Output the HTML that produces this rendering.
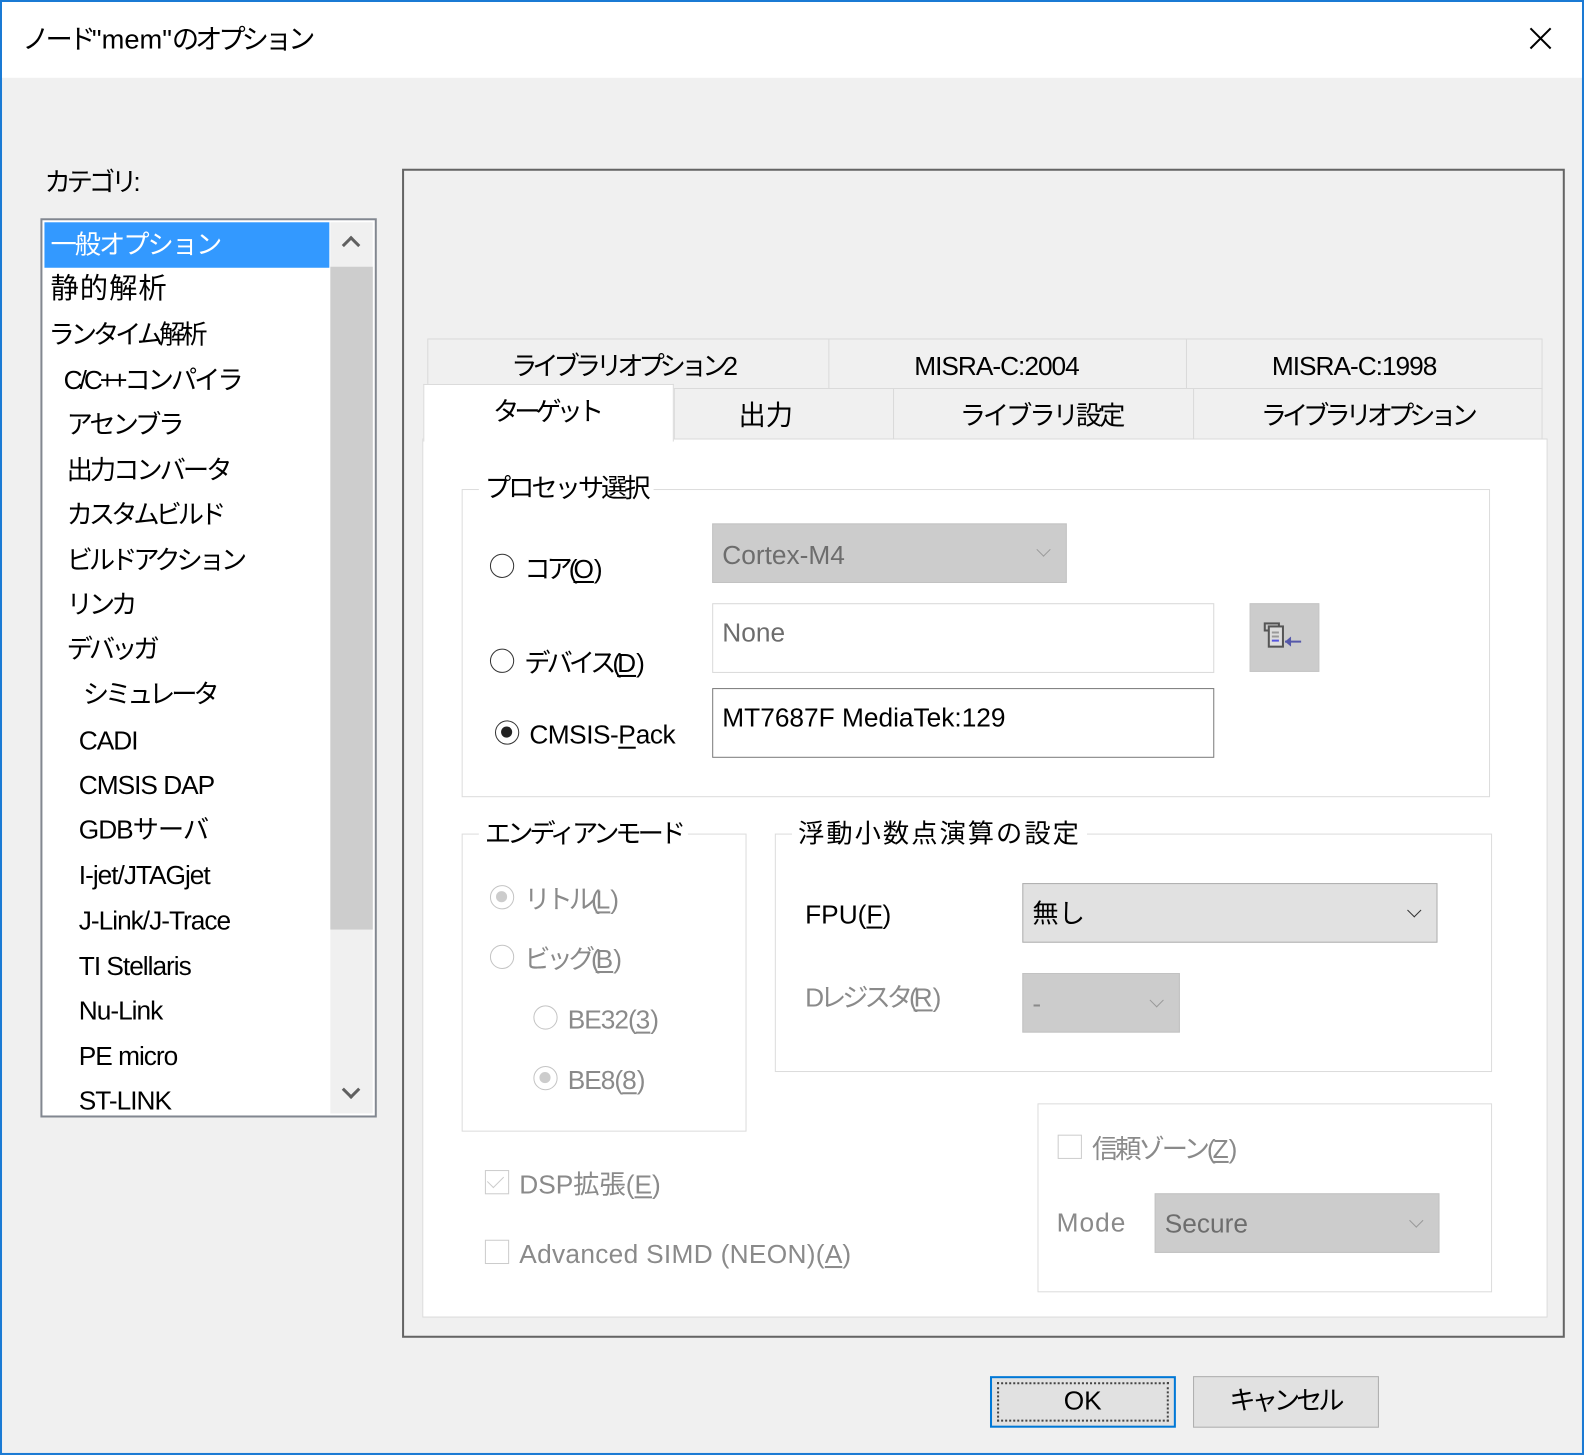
<!DOCTYPE html>
<html><head><meta charset="utf-8"><style>
html,body{margin:0;padding:0;width:1584px;height:1455px;overflow:hidden;background:#f0f0f0}
#w{position:absolute;left:0;top:0;width:1568px;height:1440px;transform:scale(1.0102,1.0104);transform-origin:0 0;background:#f0f0f0;font-family:"Liberation Sans","Noto Sans CJK JP",sans-serif;color:#000}
.a{position:absolute;white-space:nowrap}
.t{font-size:26px;line-height:30px}
.k{letter-spacing:-4px}
.k5{letter-spacing:-5px}
.k3{letter-spacing:-3px}
.g{color:#8a8a8a}
.rad{position:absolute;width:24px;height:24px;border:1.5px solid #333;border-radius:50%;box-sizing:border-box;background:#fff}
.rad.d{border-color:#c4c4c4}
.dot{position:absolute;left:5px;top:5px;width:11px;height:11px;border-radius:50%;background:#222}
.rad.d .dot{background:#ccc}
.chk{position:absolute;width:24px;height:24px;border:1.5px solid #ccc;box-sizing:border-box;background:#fff}
.combo{position:absolute;background:#cccccc;border:1px solid #c2c2c2;box-sizing:border-box}
.arrow{position:absolute;width:9px;height:9px;border-right:1.5px solid #888;border-bottom:1.5px solid #888;transform:rotate(45deg)}
.frame{position:absolute;border:1px solid #dcdcdc;box-sizing:border-box}
u{text-decoration:underline;text-underline-offset:3px;letter-spacing:0}
</style></head><body><div id="w">
<div class="a" style="left:0;top:0;width:1568px;height:1440px;border:2px solid #1a7ad4;box-sizing:border-box"></div>
<div class="a" style="left:2px;top:2px;width:1564px;height:75px;background:#fff"></div>
<div class="a" style="left:22px;top:22px;font-size:27px;line-height:34px;letter-spacing:-4px">ノード<span style="letter-spacing:0">"mem"</span>のオプション</div>
<svg class="a" style="left:1514px;top:27px" width="22" height="22" viewBox="0 0 22 22"><path d="M1 1L21 21M21 1L1 21" stroke="#000" stroke-width="2"/></svg>

<div class="a t k" style="left:44px;top:165px">カテゴリ:</div>
<div class="a" style="left:40px;top:216px;width:333px;height:890px;border:2px solid #828790;box-sizing:border-box;background:#fff"></div>
<div class="a" style="left:44px;top:220px;width:282px;height:45px;background:#3399ff"></div>
<div class="a" style="left:327px;top:220px;width:42px;height:882px;background:#f0f0f0"></div>
<div class="a" style="left:327px;top:264px;width:42px;height:656px;background:#cdcdcd"></div>
<div class="a" style="left:341px;top:236px;width:10px;height:10px;border-left:3px solid #606060;border-top:3px solid #606060;transform:rotate(45deg)"></div>
<div class="a" style="left:341px;top:1072px;width:10px;height:10px;border-right:3px solid #606060;border-bottom:3px solid #606060;transform:rotate(45deg)"></div>
<div class="a t k" style="left:50px;top:227px;color:#fff;letter-spacing:-2px">一般オプション</div>
<div class="a t" style="left:50px;top:271px;font-size:28px;letter-spacing:1px">静的解析</div>
<div class="a t k" style="left:48px;top:316px">ランタイム解析</div>
<div class="a t k3" style="left:63px;top:361px">C/C++コンパイラ</div>
<div class="a t k3" style="left:66px;top:405px">アセンブラ</div>
<div class="a t k3" style="left:66px;top:450px">出力コンバータ</div>
<div class="a t k" style="left:66px;top:494px">カスタムビルド</div>
<div class="a t k" style="left:66px;top:539px">ビルドアクション</div>
<div class="a t k" style="left:66px;top:583px">リンカ</div>
<div class="a t k" style="left:66px;top:627px">デバッガ</div>
<div class="a t k" style="left:82px;top:672px">シミュレータ</div>
<div class="a t" style="left:78px;top:718px;letter-spacing:-1px">CADI</div>
<div class="a t" style="left:78px;top:762px;letter-spacing:-1px">CMSIS DAP</div>
<div class="a t" style="left:78px;top:806px;letter-spacing:-1px">GDBサーバ</div>
<div class="a t" style="left:78px;top:851px;letter-spacing:-1px">I-jet/JTAGjet</div>
<div class="a t" style="left:78px;top:896px;letter-spacing:-1px">J-Link/J-Trace</div>
<div class="a t" style="left:78px;top:941px;letter-spacing:-1px">TI Stellaris</div>
<div class="a t" style="left:78px;top:985px;letter-spacing:-1px">Nu-Link</div>
<div class="a t" style="left:78px;top:1030px;letter-spacing:-1px">PE micro</div>
<div class="a t" style="left:78px;top:1074px;letter-spacing:-1px">ST-LINK</div>

<div class="a" style="left:398px;top:167px;width:1151px;height:1157px;border:2px solid #646464;box-sizing:border-box"></div>
<div class="a" style="left:423px;top:335px;width:1104px;height:50px;border:1px solid #dadada;box-sizing:border-box;background:#f0f0f0"></div>
<div class="a" style="left:820px;top:335px;width:1px;height:50px;background:#dadada"></div>
<div class="a" style="left:1174px;top:335px;width:1px;height:50px;background:#dadada"></div>
<div class="a t k5" style="left:506px;top:347px">ライブラリオプション<span style="letter-spacing:0">2</span></div>
<div class="a t" style="left:905px;top:347px;letter-spacing:-1px">MISRA-C:2004</div>
<div class="a t" style="left:1259px;top:347px;letter-spacing:-1px">MISRA-C:1998</div>
<div class="a" style="left:667px;top:384px;width:860px;height:51px;border:1px solid #dadada;box-sizing:border-box;background:#f0f0f0"></div>
<div class="a" style="left:884px;top:384px;width:1px;height:51px;background:#dadada"></div>
<div class="a" style="left:1181px;top:384px;width:1px;height:51px;background:#dadada"></div>
<div class="a t" style="left:731px;top:396px;font-size:27px">出力</div>
<div class="a t k3" style="left:950px;top:396px">ライブラリ設定</div>
<div class="a t k5" style="left:1248px;top:396px">ライブラリオプション</div>
<div class="a" style="left:418px;top:434px;width:1114px;height:870px;background:#fff;border:1px solid #dadada;box-sizing:border-box"></div>
<div class="a" style="left:419px;top:380px;width:248px;height:57px;background:#fff;border:1px solid #dadada;border-bottom:none;box-sizing:border-box"></div>
<div class="a t k5" style="left:488px;top:392px">ターゲット</div>

<div class="frame" style="left:457px;top:484px;width:1018px;height:305px"></div>
<div class="a t k3" style="left:474px;top:468px;background:#fff;padding:0 6px">プロセッサ選択</div>
<div class="rad" style="left:485px;top:548px"></div><div class="a t k" style="left:519px;top:548px">コア(<u>O</u>)</div>
<div class="combo" style="left:705px;top:518px;width:351px;height:59px"></div>
<div class="a t g" style="left:715px;top:534px;color:#6d6d6d">Cortex-M4</div>
<div class="arrow" style="left:1028px;top:539px;border-color:#999"></div>
<div class="rad" style="left:485px;top:642px"></div><div class="a t k" style="left:519px;top:641px">デバイス(<u>D</u>)</div>
<div class="a" style="left:705px;top:597px;width:497px;height:69px;border:1px solid #d9d9d9;box-sizing:border-box"></div>
<div class="a t" style="left:715px;top:611px;color:#6d6d6d">None</div>
<div class="a" style="left:1237px;top:597px;width:69px;height:68px;background:#cccccc;border:1px solid #c6c6c6;box-sizing:border-box"></div>
<svg class="a" style="left:1250px;top:615px" width="44" height="34" viewBox="0 0 44 34"><rect x="2" y="2" width="14" height="7" fill="none" stroke="#555" stroke-width="2"/><rect x="6" y="5" width="14" height="20" fill="#ddd" stroke="#555" stroke-width="2"/><line x1="9" y1="11" x2="16" y2="11" stroke="#999" stroke-width="2"/><line x1="9" y1="15" x2="16" y2="15" stroke="#999" stroke-width="2"/><line x1="9" y1="19" x2="16" y2="19" stroke="#55d" stroke-width="2"/><line x1="22" y1="20" x2="38" y2="20" stroke="#5558aa" stroke-width="2"/><path d="M22 20 L28 15 L28 25 Z" fill="#5558aa"/></svg>
<div class="rad" style="left:490px;top:713px"><div class="dot"></div></div><div class="a t" style="left:524px;top:712px;letter-spacing:-0.5px">CMSIS-<u>P</u>ack</div>
<div class="a" style="left:705px;top:681px;width:497px;height:69px;border:1px solid #7a7a7a;box-sizing:border-box"></div>
<div class="a t" style="left:715px;top:695px">MT7687F MediaTek:129</div>

<div class="frame" style="left:457px;top:825px;width:282px;height:295px"></div>
<div class="a t k" style="left:474px;top:810px;background:#fff;padding:0 6px">エンディアンモード</div>
<div class="rad d" style="left:485px;top:876px"><div class="dot"></div></div><div class="a t g k" style="left:519px;top:875px">リトル(<u>L</u>)</div>
<div class="rad d" style="left:485px;top:935px"></div><div class="a t g k" style="left:519px;top:934px">ビッグ(<u>B</u>)</div>
<div class="rad d" style="left:528px;top:995px"></div><div class="a t g" style="left:562px;top:994px;letter-spacing:-1px">BE32(<u>3</u>)</div>
<div class="rad d" style="left:528px;top:1055px"><div class="dot"></div></div><div class="a t g" style="left:562px;top:1054px;letter-spacing:-1px">BE8(<u>8</u>)</div>

<div class="frame" style="left:767px;top:825px;width:710px;height:236px"></div>
<div class="a t" style="left:784px;top:810px;background:#fff;padding:0 6px;letter-spacing:2px">浮動小数点演算の設定</div>
<div class="a t" style="left:797px;top:890px">FPU(<u>F</u>)</div>
<div class="combo" style="left:1012px;top:874px;width:411px;height:59px;background:#e1e1e1;border-color:#adadad"></div>
<div class="a t" style="left:1022px;top:889px">無し</div>
<div class="arrow" style="left:1395px;top:896px;border-color:#333"></div>
<div class="a t g k" style="left:797px;top:972px">Dレジスタ(<u>R</u>)</div>
<div class="combo" style="left:1012px;top:963px;width:156px;height:59px"></div>
<div class="a t g" style="left:1022px;top:978px">-</div>
<div class="arrow" style="left:1140px;top:985px;border-color:#999"></div>

<div class="chk" style="left:480px;top:1158px"></div><div class="a" style="left:486px;top:1160px;width:8px;height:14px;border-right:1.5px solid #ccc;border-bottom:1.5px solid #ccc;transform:rotate(45deg)"></div>
<div class="a t g" style="left:514px;top:1157px">DSP拡張(<u>E</u>)</div>
<div class="chk" style="left:480px;top:1227px"></div>
<div class="a t g" style="left:514px;top:1226px;letter-spacing:0.3px">Advanced SIMD (NEON)(<u>A</u>)</div>

<div class="frame" style="left:1027px;top:1092px;width:450px;height:187px"></div>
<div class="chk" style="left:1047px;top:1123px"></div>
<div class="a t g k3" style="left:1081px;top:1122px">信頼ゾーン(<u>Z</u>)</div>
<div class="a t g" style="left:1046px;top:1195px;letter-spacing:1px">Mode</div>
<div class="combo" style="left:1143px;top:1181px;width:282px;height:59px"></div>
<div class="a t" style="left:1153px;top:1196px;color:#6d6d6d">Secure</div>
<div class="arrow" style="left:1397px;top:1203px;border-color:#999"></div>

<div class="a" style="left:980px;top:1362px;width:184px;height:51px;border:2px solid #0078d7;box-sizing:border-box;background:#e1e1e1"></div>
<div class="a" style="left:987px;top:1368px;width:170px;height:39px;border:2px dotted #444;box-sizing:border-box"></div>
<div class="a t" style="left:1053px;top:1371px">OK</div>
<div class="a" style="left:1181px;top:1362px;width:184px;height:51px;border:1px solid #adadad;box-sizing:border-box;background:#e1e1e1"></div>
<div class="a t k" style="left:1217px;top:1371px">キャンセル</div>
</div></body></html>
